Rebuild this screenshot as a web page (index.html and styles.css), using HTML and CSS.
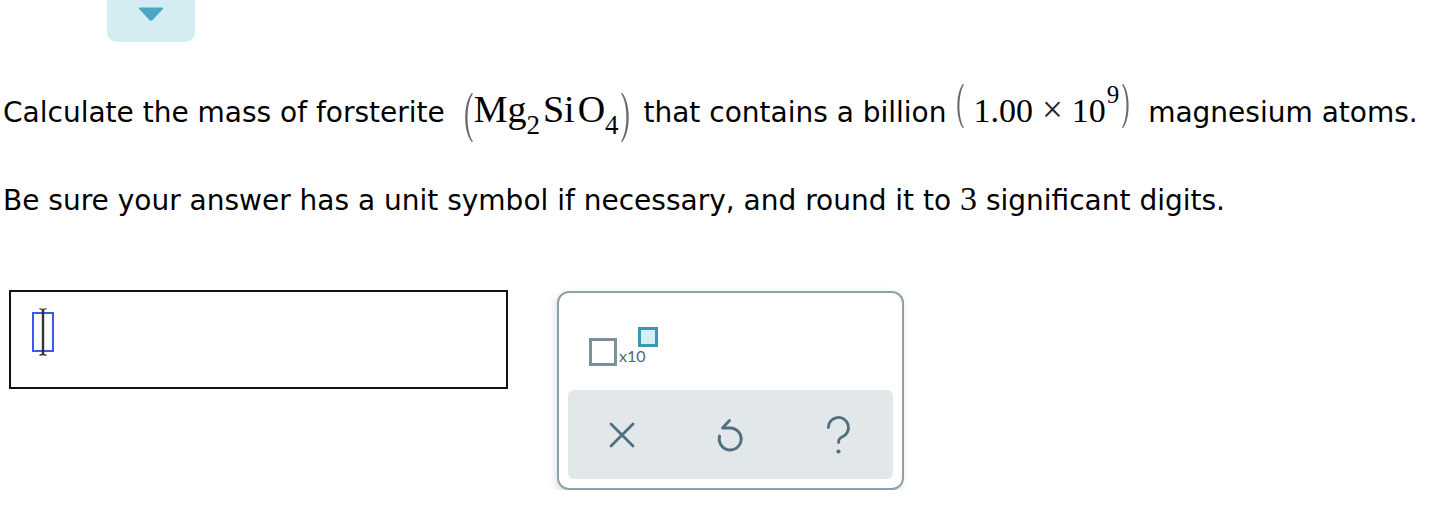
FILE: index.html
```html
<!DOCTYPE html>
<html lang="en">
<head>
<meta charset="utf-8">
<title>Forsterite question</title>
<link rel="stylesheet" href="styles.css">
</head>
<body>
<div class="page">
  <div class="toolbar">
    <button class="collapse" aria-label="Collapse">
      <svg width="28" height="16" viewBox="0 0 28 16"><path d="M3 1.5 H25 Q27 1.5 25.6 3.2 L15.6 14 Q14 15.6 12.4 14 L2.4 3.2 Q1 1.5 3 1.5 Z" fill="#4ba6c4"/></svg>
    </button>
  </div>

  <p class="line line1">Calculate the mass of forsterite <span class="math m1"><svg class="paren p1" width="13" height="51" viewBox="0 0 13 51"><path d="M12 0.8 C3 11 3 40 12 50.2 L12.9 49.3 C5.8 39 5.8 12 12.9 1.7 Z" fill="#6a6a6a"/></svg><span class="mi">Mg</span><sub class="sb">2</sub><span class="mi gap">Si</span><span class="mi gap">O</span><sub class="sb">4</sub><svg class="paren p1 r" width="13" height="51" viewBox="0 0 13 51"><path d="M1 0.8 C10 11 10 40 1 50.2 L0.1 49.3 C7.2 39 7.2 12 0.1 1.7 Z" fill="#6a6a6a"/></svg></span> that contains a billion <span class="math m2"><svg class="paren p2" width="11" height="46" viewBox="0 0 11 46"><path d="M10 0.8 C2.5 10 2.5 36 10 45.2 L10.9 44.3 C5 35 5 11 10.9 1.7 Z" fill="#6a6a6a"/></svg><span class="mn">1.00</span><span class="op">×</span><span class="mn">10</span><sup class="sp">9</sup><svg class="paren p2 r" width="11" height="46" viewBox="0 0 11 46"><path d="M1 0.8 C8.5 10 8.5 36 1 45.2 L0.1 44.3 C6 35 6 11 0.1 1.7 Z" fill="#6a6a6a"/></svg></span> magnesium atoms.</p>

  <p class="line line2">Be sure your answer has a unit symbol if necessary, and round it to <span class="num">3</span> significant digits.</p>

  <div class="answer-row">
    <div class="answer-box">
      <svg class="cursor" width="24" height="52" viewBox="0 0 24 52">
        <rect x="2" y="7" width="20" height="38" fill="none" stroke="#3a57f5" stroke-width="2"/>
        <line x1="12" y1="3.5" x2="12" y2="48.5" stroke="#333" stroke-width="2.4"/>
        <path d="M8.5 2.5 Q12 4.5 15.5 2.5 M8.5 49.5 Q12 47.5 15.5 49.5" fill="none" stroke="#333" stroke-width="1.3"/>
      </svg>
    </div>

    <div class="panel">
      <div class="tools">
        <div class="sci">
          <span class="mant"></span><span class="x10">x10</span><span class="exp"></span>
        </div>
      </div>
      <div class="actions">
        <button class="act" aria-label="Clear">
          <svg width="28" height="28" viewBox="0 0 28 28"><path d="M3 3 L25 25 M25 3 L3 25" stroke="#4e6f7f" stroke-width="2.8" stroke-linecap="round" fill="none"/></svg>
        </button>
        <button class="act" aria-label="Undo">
          <svg width="30" height="36" viewBox="0 0 30 36"><path d="M14.5 3.5 L7.5 11 L15.5 11 A11 11 0 1 1 4.6 19" stroke="#4e6f7f" stroke-width="2.8" stroke-linecap="round" stroke-linejoin="round" fill="none"/></svg>
        </button>
        <button class="act" aria-label="Help">
          <svg width="27" height="42" viewBox="0 0 27 42"><path d="M3.3 13.5 A10.1 10.1 0 1 1 17.5 22.8 Q13.5 24.5 13.5 28.5" stroke="#4e6f7f" stroke-width="2.8" stroke-linecap="round" fill="none"/><circle cx="13.5" cy="37.5" r="2.1" fill="#4e6f7f"/></svg>
        </button>
      </div>
    </div>
  </div>
</div>
</body>
</html>
```

FILE: styles.css
```css
html, body {
  margin: 0;
  padding: 0;
  background: #ffffff;
}

body {
  font-family: "DejaVu Sans", Verdana, sans-serif;
  color: #000;
}

.toolbar {
  height: 42px;
  padding-left: 107px;
}

.collapse {
  width: 88px;
  height: 42px;
  border: 0;
  margin: 0;
  padding: 6px 0 0 0;
  background: #d3edf2;
  border-radius: 0 0 10px 10px;
  display: flex;
  justify-content: center;
  align-items: flex-start;
}

.line {
  margin: 0;
  padding-left: 3px;
  font-size: 28px;
  line-height: 60px;
  height: 60px;
  white-space: nowrap;
}

.line1 {
  margin-top: 40px;
}

.line2 {
  margin-top: 29px;
}

.math {
  font-family: "Liberation Serif", "Times New Roman", serif;
  line-height: 1;
  white-space: nowrap;
}

.m1 {
  font-size: 38px;
  margin-left: 6px;
  margin-right: 1px;
}

.m2 {
  font-size: 34px;
  margin-left: -2px;
  margin-right: 6px;
}

.paren {
  display: inline-block;
}

.p1 {
  vertical-align: -21px;
  margin-right: 1px;
}

.p1.r {
  margin-left: 2px;
  margin-right: 0;
}

.p2 {
  vertical-align: -7px;
  margin-right: 9px;
}

.p2.r {
  margin-left: 3px;
  margin-right: 0;
}

.gap {
  margin-left: 3px;
}

.sb,
.sp {
  line-height: 1;
}

.sb {
  font-size: 27px;
  vertical-align: -12px;
}

.sp {
  font-size: 25px;
  vertical-align: 19px;
  margin-left: 1px;
}

.op {
  margin: 0 9px;
  font-size: 37px;
  color: #222;
}

.num {
  font-family: "Liberation Serif", "Times New Roman", serif;
  font-size: 34px;
  line-height: 1;
}

.answer-row {
  display: flex;
  align-items: flex-start;
  gap: 49px;
  margin-top: 59px;
  padding-left: 9px;
}

.answer-box {
  box-sizing: border-box;
  width: 499px;
  height: 99px;
  border: 2px solid #111;
  padding: 14px 0 0 20px;
}

.cursor {
  display: block;
}

.panel {
  box-sizing: border-box;
  width: 347px;
  height: 199px;
  margin-top: 1px;
  border: 2px solid #8ea1ab;
  border-radius: 12px;
  padding: 9px;
  background: #fff;
  box-shadow: -2px 3px 8px rgba(0, 0, 0, 0.12);
  display: flex;
  flex-direction: column;
}

.tools {
  height: 88px;
  padding: 36px 0 0 21px;
  box-sizing: border-box;
}

.sci {
  display: flex;
  align-items: flex-end;
  height: 28px;
}

.mant {
  box-sizing: border-box;
  width: 28px;
  height: 28px;
  border: 3px solid #7c909a;
}

.x10 {
  font-family: Lato, "Open Sans", sans-serif;
  font-size: 16px;
  line-height: 1;
  color: #4d6878;
  margin-left: 2px;
  margin-bottom: 2px;
}

.exp {
  box-sizing: border-box;
  width: 20px;
  height: 20px;
  border: 3px solid #3d97b4;
  background: #d5eef3;
  align-self: flex-start;
  margin-top: -11px;
  margin-left: -8px;
}

.actions {
  flex: 1;
  display: grid;
  grid-template-columns: repeat(3, 1fr);
  align-items: center;
  justify-items: center;
  background: #e2e7ea;
  border-radius: 6px;
}

.act {
  border: 0;
  background: none;
  padding: 0;
  margin: 0;
  display: flex;
}
```
